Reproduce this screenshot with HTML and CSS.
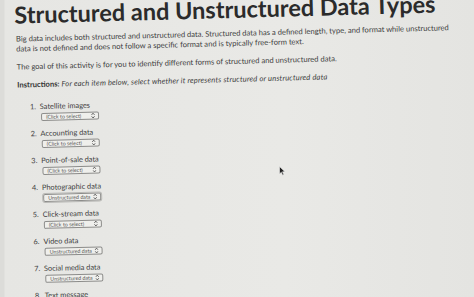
FILE: index.html
```html
<!DOCTYPE html>
<html>
<head>
<meta charset="utf-8">
<link rel="stylesheet" href="styles.css">
</head>
<body>
<div class="screen">
  <div class="page">
    <h1 class="title">Structured and Unstructured Data Types</h1>
    <p class="text">Big data includes both structured and unstructured data. Structured data has a defined length, type, and format while unstructured data is not defined and does not follow a specific format and is typically free-form text.</p>
    <p class="text">The goal of this activity is for you to identify different forms of structured and unstructured data.</p>
    <p class="text"><b>Instructions:</b> <i>For each item below, select whether it represents structured or unstructured data</i></p>
    <ol class="items">
      <li class="item"><span class="label">Satellite images</span><div class="pick"><span class="val">(Click to select)</span><svg class="arr" width="4" height="6" viewBox="0 0 4 6"><path d="M0.5 2.3 L2 0.6 L3.5 2.3 M0.5 3.7 L2 5.4 L3.5 3.7" fill="none" stroke="#444" stroke-width="0.8"/></svg></div></li>
      <li class="item"><span class="label">Accounting data</span><div class="pick"><span class="val">(Click to select)</span><svg class="arr" width="4" height="6" viewBox="0 0 4 6"><path d="M0.5 2.3 L2 0.6 L3.5 2.3 M0.5 3.7 L2 5.4 L3.5 3.7" fill="none" stroke="#444" stroke-width="0.8"/></svg></div></li>
      <li class="item"><span class="label">Point-of-sale data</span><div class="pick"><span class="val">(Click to select)</span><svg class="arr" width="4" height="6" viewBox="0 0 4 6"><path d="M0.5 2.3 L2 0.6 L3.5 2.3 M0.5 3.7 L2 5.4 L3.5 3.7" fill="none" stroke="#444" stroke-width="0.8"/></svg></div></li>
      <li class="item"><span class="label">Photographic data</span><div class="pick focus"><span class="val">Unstructured data</span><svg class="arr" width="4" height="6" viewBox="0 0 4 6"><path d="M0.5 2.3 L2 0.6 L3.5 2.3 M0.5 3.7 L2 5.4 L3.5 3.7" fill="none" stroke="#444" stroke-width="0.8"/></svg></div></li>
      <li class="item"><span class="label">Click-stream data</span><div class="pick"><span class="val">(Click to select)</span><svg class="arr" width="4" height="6" viewBox="0 0 4 6"><path d="M0.5 2.3 L2 0.6 L3.5 2.3 M0.5 3.7 L2 5.4 L3.5 3.7" fill="none" stroke="#444" stroke-width="0.8"/></svg></div></li>
      <li class="item"><span class="label">Video data</span><div class="pick"><span class="val">Unstructured data</span><svg class="arr" width="4" height="6" viewBox="0 0 4 6"><path d="M0.5 2.3 L2 0.6 L3.5 2.3 M0.5 3.7 L2 5.4 L3.5 3.7" fill="none" stroke="#444" stroke-width="0.8"/></svg></div></li>
      <li class="item"><span class="label">Social media data</span><div class="pick"><span class="val">Unstructured data</span><svg class="arr" width="4" height="6" viewBox="0 0 4 6"><path d="M0.5 2.3 L2 0.6 L3.5 2.3 M0.5 3.7 L2 5.4 L3.5 3.7" fill="none" stroke="#444" stroke-width="0.8"/></svg></div></li>
      <li class="item"><span class="label">Text message</span><div class="pick"><span class="val">(Click to select)</span><svg class="arr" width="4" height="6" viewBox="0 0 4 6"><path d="M0.5 2.3 L2 0.6 L3.5 2.3 M0.5 3.7 L2 5.4 L3.5 3.7" fill="none" stroke="#444" stroke-width="0.8"/></svg></div></li>
    </ol>
  </div>
  <svg class="cursor" width="7" height="10" viewBox="0 0 7 10"><path d="M0.5 0.5 L0.5 8 L2.3 6.3 L3.6 9.2 L4.8 8.6 L3.5 5.8 L6 5.8 Z" fill="#222" stroke="#eee" stroke-width="0.6"/></svg>
</div>
</body>
</html>
```

FILE: styles.css
```css
html, body {
  margin: 0;
  padding: 0;
  background: #e4e4e1;
  overflow: hidden;
}
.screen {
  position: relative;
  width: 474px;
  height: 297px;
  overflow: hidden;
  background: linear-gradient(90deg, #dcdcd9 0, #dcdcd9 4px, #e6e6e3 5px, #e9e9e6 60%, #e4e4e1 100%);
}
.page {
  padding: 0 0 0 14px;
  transform: rotate(-1.5deg);
  transform-origin: 0 0;
  font-family: "Lato", "Open Sans", sans-serif;
  color: #3d3d3d;
}
.title {
  margin: 0;
  padding-top: 1px;
  font-size: 23.5px;
  line-height: 28px;
  font-weight: 700;
  color: #2b2b2b;
  letter-spacing: 0;
}
.text {
  margin: 5px 0 0 1px;
  font-size: 7.6px;
  line-height: 10px;
  width: 440px;
}
.text + .text {
  margin-top: 8px;
}
.text b {
  font-weight: 700;
  color: #333;
}
.text i {
  letter-spacing: 0.15px;
}
.items {
  margin: 13px 0 0 0;
  padding: 0 0 0 21px;
  font-size: 7.4px;
  line-height: 10px;
}
.item {
  height: 27px;
  padding-left: 2px;
}
.label {
  display: block;
}
.pick {
  margin: 1px 0 0 1px;
  width: 58px;
  height: 8px;
  box-sizing: border-box;
  border: 1px solid #8c8c8a;
  border-radius: 2px;
  background: #efefec;
  display: flex;
  align-items: center;
  justify-content: space-between;
  padding: 0 3px 0 4px;
  font-size: 5.3px;
  line-height: 6px;
  color: #555;
  white-space: nowrap;
}
.pick.focus {
  outline: 1px solid #b9b9b6;
  outline-offset: 0.5px;
}
.arr {
  display: block;
  flex: none;
}
.cursor {
  position: absolute;
  left: 279px;
  top: 166px;
}
```
